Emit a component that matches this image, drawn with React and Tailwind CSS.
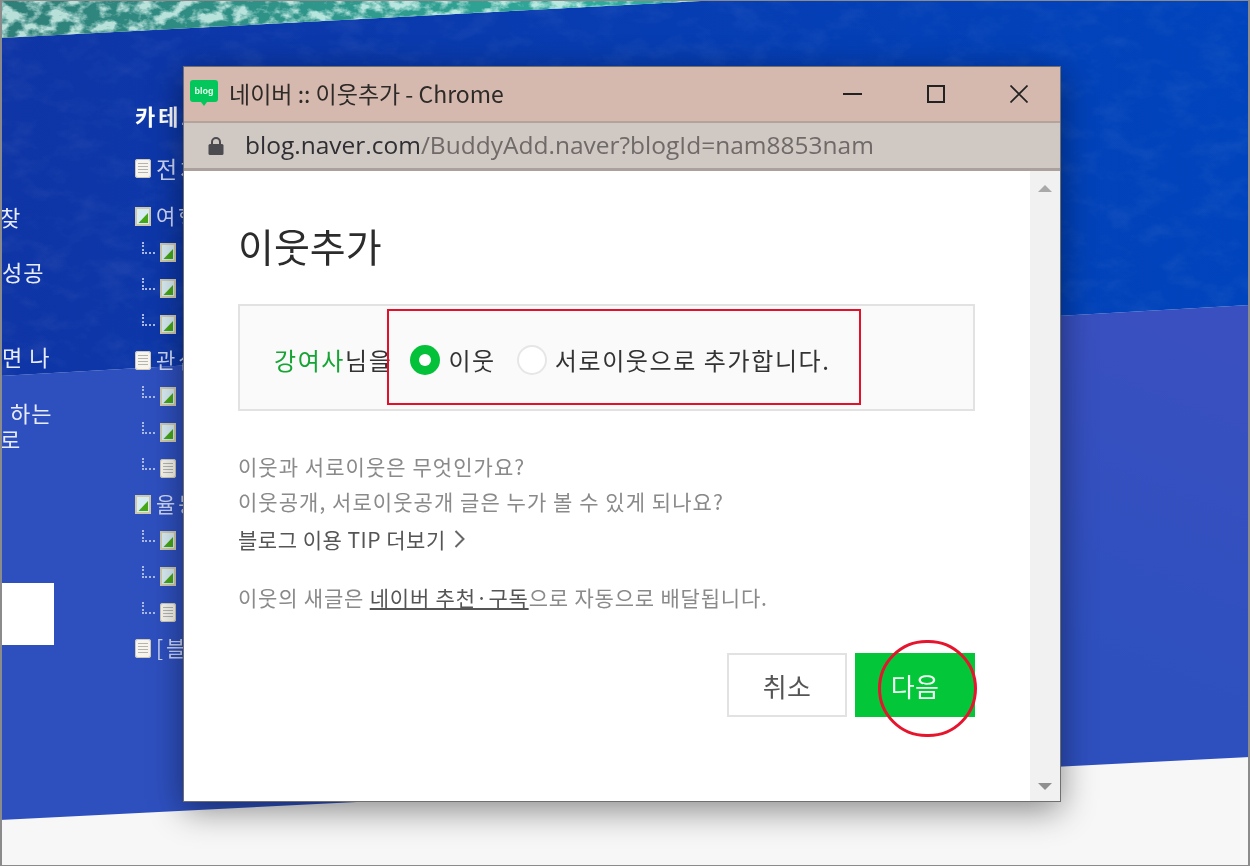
const KR = "font-['Noto_Sans_CJK_KR','Noto_Sans',sans-serif]";

const categories = [
  { kind: "doc", label: "전체", depth: 0, h: "h-[60px]", text: "text-[23px]" },
  { kind: "img", label: "여행", depth: 0, h: "h-[36px]" },
  { kind: "img", depth: 1, h: "h-[36px]" },
  { kind: "img", depth: 1, h: "h-[36px]" },
  { kind: "img", depth: 1, h: "h-[36px]" },
  { kind: "doc", label: "관심", depth: 0, h: "h-[36px]" },
  { kind: "img", depth: 1, h: "h-[36px]" },
  { kind: "img", depth: 1, h: "h-[36px]" },
  { kind: "doc", depth: 1, h: "h-[36px]" },
  { kind: "img", label: "율동", depth: 0, h: "h-[36px]" },
  { kind: "img", depth: 1, h: "h-[36px]" },
  { kind: "img", depth: 1, h: "h-[36px]" },
  { kind: "doc", depth: 1, h: "h-[36px]" },
  { kind: "doc", label: "[블로그", depth: 0, h: "h-[36px]" },
];

// 뒤쪽 페이지 배경 (지도 텍스처 + 사선 띠)
const Backdrop = () => (
  <svg className="absolute inset-0" width="1250" height="866" viewBox="0 0 1250 866">
    <defs>
      <linearGradient id="deep" x1="0" y1="0" x2="1" y2="0">
        <stop offset="0" stopColor="#0f35a6" />
        <stop offset="1" stopColor="#0044bd" />
      </linearGradient>
      <linearGradient id="band" x1="0" y1="1" x2="1" y2="0">
        <stop offset="0.6" stopColor="#2e50bf" />
        <stop offset="0.95" stopColor="#3a50c0" />
      </linearGradient>
      <linearGradient id="teal" x1="0" y1="0" x2="1" y2="0">
        <stop offset="0" stopColor="#2f7f78" />
        <stop offset="1" stopColor="#2fb3a2" />
      </linearGradient>
      <filter id="rock" x="0" y="0" width="100%" height="100%">
        <feTurbulence type="fractalNoise" baseFrequency="0.03 0.05" numOctaves="5" seed="7" />
        <feColorMatrix values="0 0 0 0 1  0 0 0 0 1  0 0 0 0 1  2.4 0 0 0 -1.05" />
      </filter>
      <filter id="rockTeal" x="0" y="0" width="100%" height="100%">
        <feTurbulence type="fractalNoise" baseFrequency="0.06 0.09" numOctaves="4" seed="3" />
        <feColorMatrix values="0 0 0 0 0.8  0 0 0 0 1  0 0 0 0 0.95  4 0 0 0 -1.7" />
      </filter>
      <clipPath id="deepClip">
        <polygon points="0,38 720,0 1250,0 1250,305 0,376" />
      </clipPath>
      <clipPath id="tealClip">
        <polygon points="0,0 720,0 0,38" />
      </clipPath>
    </defs>
    <rect width="1250" height="866" fill="#f7f7f7" />
    <polygon points="0,376 1250,305 1250,757 0,820" fill="url(#band)" />
    <polygon points="0,38 720,0 1250,0 1250,305 0,376" fill="url(#deep)" />
    <polygon points="0,0 720,0 0,38" fill="url(#teal)" />
    <g clipPath="url(#deepClip)">
      <rect width="1250" height="380" filter="url(#rock)" opacity="0.05" />
    </g>
    <g clipPath="url(#tealClip)">
      <rect width="730" height="40" filter="url(#rockTeal)" opacity="0.75" />
    </g>
  </svg>
);

const DocIcon = () => (
  <span className="flex h-[19px] w-[16px] shrink-0 flex-col justify-center gap-[2px] rounded-[3px] bg-[#f7f5ee] px-[3px] shadow-[0_0_0_1px_#cfc9b4_inset]">
    <span className="h-px bg-[#b5b5b0]" />
    <span className="h-px bg-[#b5b5b0]" />
    <span className="h-px bg-[#b5b5b0]" />
    <span className="h-px bg-[#b5b5b0]" />
  </span>
);

const ImgIcon = () => (
  <svg className="shrink-0" width="16" height="19" viewBox="0 0 16 19">
    <rect x="1" y="1" width="14" height="17" fill="#d8ecf4" stroke="#cfc9ac" strokeWidth="2" />
    <polygon points="3.5,16 13,16 13,6" fill="#45a816" />
  </svg>
);

const CategoryRow = ({ item }) => (
  <div className={`flex items-center ${item.h}`}>
    {item.depth === 1 && (
      <span className="mr-[5px] ml-[7px] mb-[8px] h-[12px] w-[13px] shrink-0 border-b-2 border-l-2 border-dotted border-[#aab8e6]" />
    )}
    {item.kind === "doc" ? <DocIcon /> : <ImgIcon />}
    {item.label && (
      <span className={`ml-[5px] whitespace-nowrap tracking-[3px] ${item.text || "text-[21px]"} text-[#cdd6f5]`}>{item.label}</span>
    )}
  </div>
);

const PageBehind = () => (
  <div className={`relative flex h-full ${KR}`}>
    <div className="w-[135px] shrink-0 text-[22px] leading-[26px] tracking-[1px] text-[#e8ecfa]">
      <p className="mt-[203px]">찾</p>
      <p className="mt-[29px] pl-[2px]">성공</p>
      <p className="mt-[59px] pl-[2px]">면 나</p>
      <p className="mt-[30px] pl-[10px]">하는</p>
      <p>로</p>
      <div className="mt-[132px] h-[62px] w-[54px] bg-white" />
    </div>
    <div className="pt-[102px]">
      <p className="mb-[10px] whitespace-nowrap text-[22px] leading-[26px] font-bold tracking-[3px] text-white">카테고리</p>
      {categories.map((item, i) => (
        <CategoryRow key={i} item={item} />
      ))}
    </div>
  </div>
);

const TitleBar = () => (
  <div className="flex h-[56px] shrink-0 items-center border-b-2 border-[#b3a39b] bg-[#d6b9ae] pl-[5px]">
    <svg width="30" height="30" viewBox="0 0 30 30" className="shrink-0">
      <path d="M4 1h22a3 3 0 0 1 3 3v16a3 3 0 0 1-3 3h-8l-3 4-3-4H4a3 3 0 0 1-3-3V4a3 3 0 0 1 3-3z" fill="#03c75a" />
      <text x="15" y="15" textAnchor="middle" fontSize="9" fontWeight="700" fill="#e8fff0" fontFamily="Liberation Sans, sans-serif">blog</text>
    </svg>
    <span className={`mb-[2px] ml-[10px] whitespace-nowrap text-[23px] text-[#2e2a28] ${KR}`}>네이버 :: 이웃추가 - Chrome</span>
    <div className="ml-auto flex items-center pr-[32px]">
      <span className="h-[2px] w-[19px] bg-[#222]" />
      <span className="ml-[65px] h-[18px] w-[18px] border-2 border-[#222]" />
      <svg className="ml-[65px]" width="18" height="18" viewBox="0 0 18 18">
        <path d="M0.5 0.5 17.5 17.5M17.5 0.5 0.5 17.5" stroke="#222" strokeWidth="1.7" />
      </svg>
    </div>
  </div>
);

const AddressBar = () => (
  <div className="flex h-[48px] shrink-0 items-center border-b-[3px] border-[#aaa19c] bg-[#d0c8c3] pl-[24px]">
    <svg width="16" height="20" viewBox="0 0 16 20" className="shrink-0">
      <path d="M4 9V6a4 4 0 0 1 8 0v3" fill="none" stroke="#4b4b50" strokeWidth="2" />
      <rect x="0.5" y="8" width="15" height="11" rx="1.5" fill="#4b4b50" />
    </svg>
    <span className="ml-[21px] whitespace-nowrap font-['Open_Sans',sans-serif] text-[24.5px] text-[#2f2f33]">
      blog.naver.com<span className="text-[#6f6a68]">/BuddyAdd.naver?blogId=nam8853nam</span>
    </span>
  </div>
);

const Radio = ({ checked, className }) =>
  checked ? (
    <span className={`flex h-[30px] w-[30px] shrink-0 items-center justify-center rounded-full bg-[#03c239] ${className}`}>
      <span className="h-[12px] w-[12px] rounded-full bg-white" />
    </span>
  ) : (
    <span className={`h-[30px] w-[30px] shrink-0 rounded-full border-2 border-[#e6e6e6] bg-white ${className}`} />
  );

const Dialog = () => (
  <div className={`flex min-h-0 flex-1 bg-white ${KR}`}>
    <div className="min-w-0 flex-1 pt-[46px] pl-[54px]">
      <h1 className="text-[39px] leading-[56px] font-normal text-[#2c2c2c]">이웃추가</h1>
      <div className="relative mt-[31px] flex h-[107px] w-[737px] items-center border-2 border-[#e2e2e2] bg-[#fafafa] pt-[4px] pl-[34px] text-[24px] tracking-[1.6px] text-[#333]">
        <span className="whitespace-nowrap">
          <span className="text-[#16a534]">강여사</span>님을
        </span>
        <Radio checked className="ml-[18px]" />
        <span className="ml-[8px] whitespace-nowrap">이웃</span>
        <Radio className="ml-[21px]" />
        <span className="ml-[8px] whitespace-nowrap">서로이웃으로 추가합니다.</span>
        <div className="absolute top-[3px] left-[147px] h-[96px] w-[474px] border-2 border-[#e60f2a]" />
      </div>
      <div className="mt-[38px] text-[21px] leading-[35px] tracking-[1.05px] text-[#8a8a8a]">
        <p>이웃과 서로이웃은 무엇인가요?</p>
        <p>이웃공개, 서로이웃공개 글은 누가 볼 수 있게 되나요?</p>
      </div>
      <p className="mt-[2px] flex items-center text-[21px] leading-[36px] tracking-[0.5px] text-[#555]">
        <span>블로그 이용 TIP 더보기</span>
        <svg className="ml-[8px]" width="11" height="18" viewBox="0 0 11 18">
          <path d="M1.5 1 9.5 9 1.5 17" fill="none" stroke="#666" strokeWidth="2" />
        </svg>
      </p>
      <p className="mt-[22px] text-[21px] leading-[36px] tracking-[0.8px] text-[#8a8a8a]">
        이웃의 새글은 <span className="text-[#555] underline underline-offset-2">네이버 추천·구독</span>으로 자동으로 배달됩니다.
      </p>
      <div className="relative mt-[38px] flex w-[737px] justify-end gap-[8px] text-[26px] tracking-[0.3px]">
        <button className="h-[64px] w-[120px] border-2 border-[#e2e2e2] bg-white text-[#555]">취소</button>
        <button className="h-[64px] w-[120px] bg-[#03c639] text-[#f2fff4]">다음</button>
        <div className="absolute top-[-13px] right-[-2px] h-[97px] w-[99px] rounded-full border-[3px] border-[#e6142d]" />
      </div>
    </div>
    <div className="flex w-[30px] shrink-0 flex-col items-center justify-between bg-[#f1f1f1] pt-[14px] pb-[11px]">
      <span className="h-0 w-0 border-x-[7px] border-b-[7px] border-x-transparent border-b-[#a9a9a9]" />
      <span className="h-0 w-0 border-x-[7px] border-t-[7px] border-x-transparent border-t-[#8f8f8f]" />
    </div>
  </div>
);

export default function App() {
  return (
    <div className="relative h-[866px] w-[1250px] overflow-hidden blur-[0.4px]">
      <Backdrop />
      <PageBehind />
      {/* 팝업 창 */}
      <div className="absolute top-[66px] left-[183px] flex h-[736px] w-[878px] flex-col border border-[#6f6f6f] shadow-[0_8px_32px_rgba(0,0,0,0.45)]">
        <TitleBar />
        <AddressBar />
        <Dialog />
      </div>
      <div className="pointer-events-none absolute inset-0 border-x-2 border-y border-[#8b8b8b]" />
    </div>
  );
}
